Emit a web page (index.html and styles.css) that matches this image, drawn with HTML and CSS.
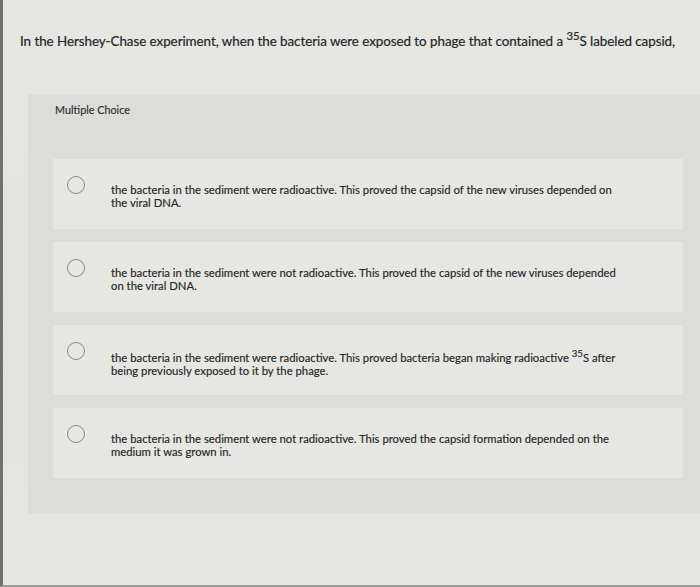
FILE: index.html
```html
<!DOCTYPE html>
<html>
<head>
<meta charset="utf-8">
<link rel="stylesheet" href="styles.css">
</head>
<body>
<div class="screen">
  <p class="question">In the Hershey-Chase experiment, when the bacteria were exposed to phage that contained a <sup>35</sup>S labeled capsid,</p>
  <section class="panel">
    <div class="label">Multiple Choice</div>
    <div class="options">
      <div class="option">
        <span class="radio"></span>
        <p class="text">the bacteria in the sediment were radioactive. This proved the capsid of the new viruses depended on the viral DNA.</p>
      </div>
      <div class="option">
        <span class="radio"></span>
        <p class="text">the bacteria in the sediment were not radioactive. This proved the capsid of the new viruses depended on the viral DNA.</p>
      </div>
      <div class="option">
        <span class="radio"></span>
        <p class="text">the bacteria in the sediment were radioactive. This proved bacteria began making radioactive <sup>35</sup>S after being previously exposed to it by the phage.</p>
      </div>
      <div class="option">
        <span class="radio"></span>
        <p class="text">the bacteria in the sediment were not radioactive. This proved the capsid formation depended on the medium it was grown in.</p>
      </div>
    </div>
  </section>
</div>
</body>
</html>
```

FILE: styles.css
```css
html, body {
  margin: 0;
  padding: 0;
  height: 100%;
}
body {
  background: #e4e4e0;
  font-family: Lato, "Open Sans", "Liberation Sans", sans-serif;
  color: #262626;
}
.screen {
  height: 100%;
  box-sizing: border-box;
  border-left: 3px solid #707070;
  border-bottom: 2px solid #9a9a96;
  padding-top: 32px;
  background: linear-gradient(180deg, #e6e6e2 0%, #e3e3df 60%, #e6e6e3 100%);
}
.question {
  margin: 0 0 0 17px;
  font-size: 13.4px;
  letter-spacing: -0.05px;
  line-height: 18px;
  -webkit-text-stroke: 0.2px #262626;
}
sup {
  font-size: 0.85em;
  line-height: 0;
  vertical-align: 0.5em;
}
.text sup {
  line-height: 1;
}
.panel {
  margin: 44px 0 0 25px;
  height: 420px;
  background: #dcdcd8;
  padding: 9px 0 0 0;
  box-sizing: border-box;
}
.label {
  font-size: 10.8px;
  margin-left: 27px;
  line-height: 14px;
  color: #2e2e2e;
  -webkit-text-stroke: 0.15px #2e2e2e;
}
.options {
  margin: 42px 17px 0 25px;
  display: flex;
  flex-direction: column;
  gap: 13px;
}
.option {
  background: #e6e6e2;
  height: 70px;
  box-sizing: border-box;
  display: flex;
  align-items: flex-start;
  padding: 17px 66px 0 14px;
}
.radio {
  flex: none;
  width: 18px;
  height: 18px;
  box-sizing: border-box;
  border: 1.5px solid #8a8a8a;
  border-radius: 50%;
}
.text {
  margin: 7px 0 0 26px;
  font-size: 11.3px;
  line-height: 13px;
  color: #262626;
  -webkit-text-stroke: 0.15px #262626;
}
```
